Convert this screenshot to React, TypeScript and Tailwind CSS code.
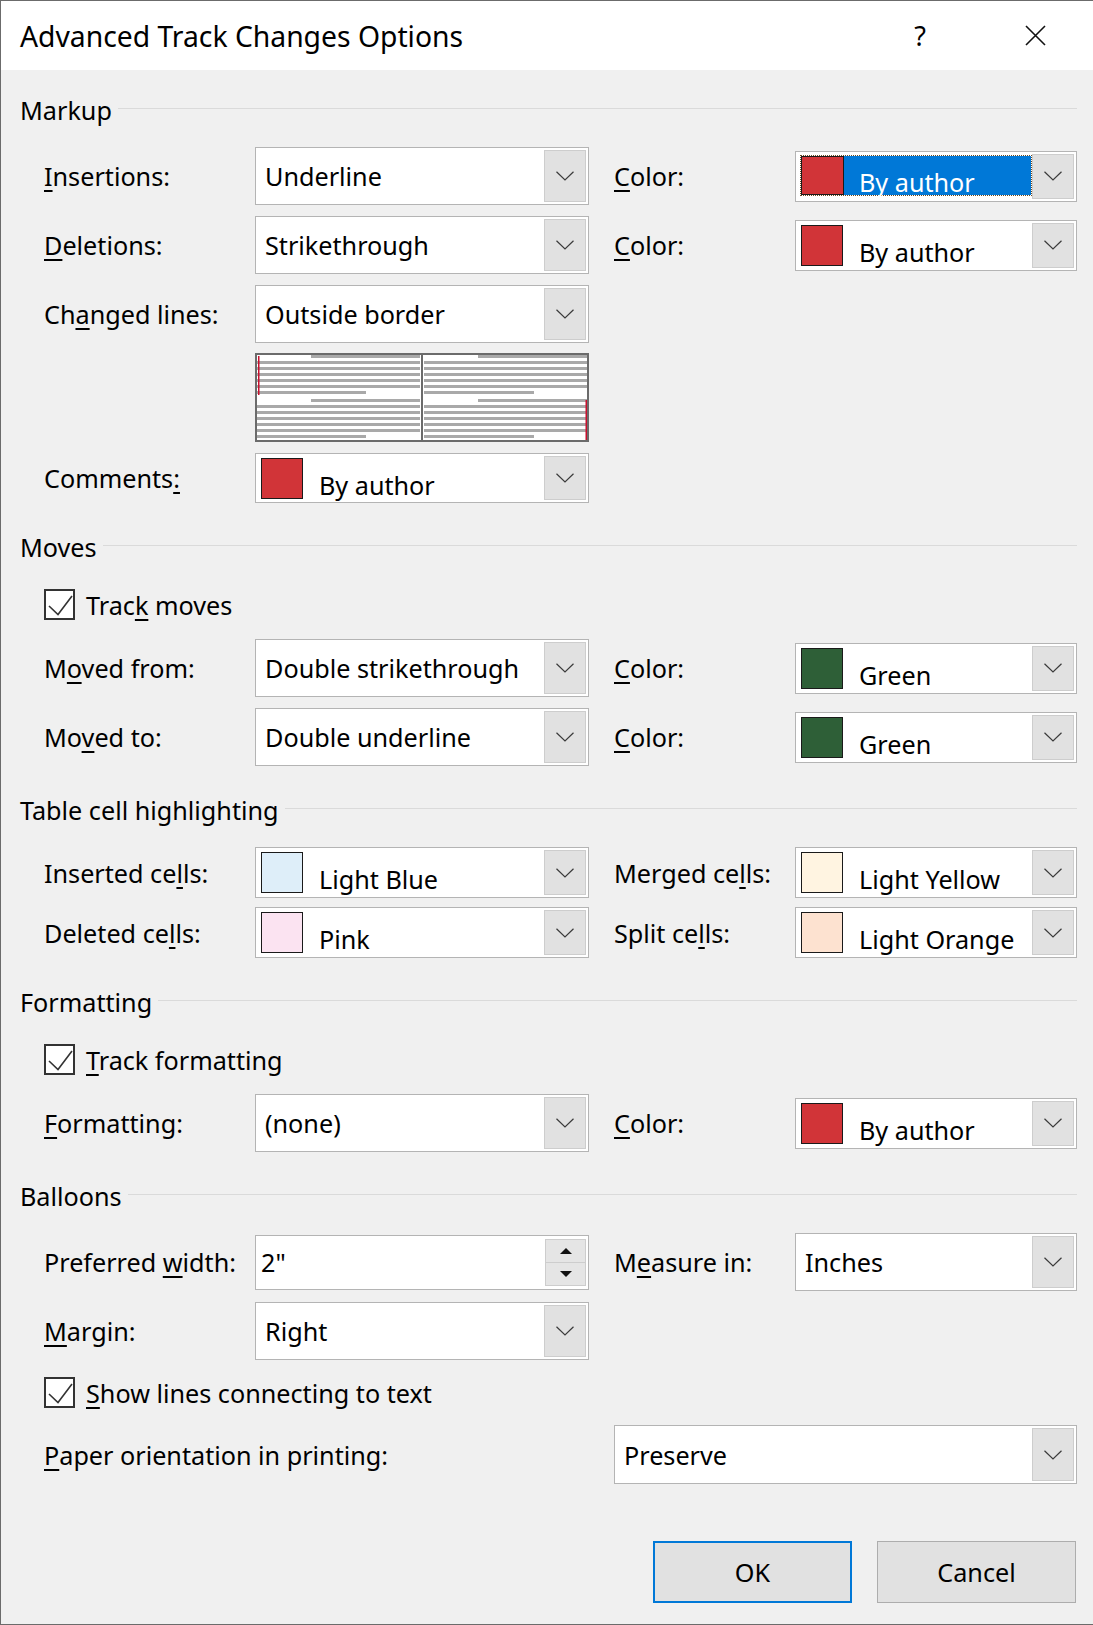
import React from "react";

const RED = "bg-[#d13438]";
const GREEN = "bg-[#2e5f37]";

function U({ children }: { children: React.ReactNode }) {
  return <span className="underline decoration-2 underline-offset-[4px]">{children}</span>;
}

function Chevron() {
  return (
    <svg width="18" height="10" viewBox="0 0 18 10" fill="none" className="block">
      <path d="M0.5 0.8 L9 9 L17.5 0.8" stroke="#3a3a3a" strokeWidth="1.2" />
    </svg>
  );
}

function ChevronBox() {
  return (
    <div className="flex w-[42px] shrink-0 items-center justify-center self-stretch border border-[#cdcdcd] bg-[#e1e1e1]">
      <Chevron />
    </div>
  );
}

function Select({ value, width = "w-[334px]", height = "h-[58px]" }: { value: string; width?: string; height?: string }) {
  return (
    <div className={`flex ${height} ${width} shrink-0 border border-[#b4b4b4] bg-white p-[2px]`}>
      <div className="flex flex-1 items-center pl-[7px]">{value}</div>
      <ChevronBox />
    </div>
  );
}

function ColorSelect({
  swatch,
  value,
  width = "w-[282px]",
  height = "h-[51px]",
  selected = false,
}: {
  swatch: string;
  value: string;
  width?: string;
  height?: string;
  selected?: boolean;
}) {
  return (
    <div className={`flex ${height} ${width} shrink-0 border border-[#b4b4b4] bg-white p-[2px]`}>
      {selected ? (
        <div className="mb-[3px] ml-[2px] mt-[1px] flex flex-1 border border-dotted border-[#6b4a22]">
          <div className={`w-[43px] border border-[#1a1a1a] ${swatch}`} />
          <div className="flex flex-1 items-center bg-[#0078d7] pl-[15px] text-white">
            <span className="mt-[13px]">{value}</span>
          </div>
        </div>
      ) : (
        <div className="flex flex-1 items-center pl-[3px]">
          <div className={`h-[41px] w-[42px] shrink-0 border border-[#1a1a1a] ${swatch}`} />
          <span className="ml-[16px] mt-[13px]">{value}</span>
        </div>
      )}
      <ChevronBox />
    </div>
  );
}

function Check({ children }: { children: React.ReactNode }) {
  return (
    <div className="flex h-[31px] items-center">
      <div className="flex h-[31px] w-[31px] shrink-0 items-center justify-center border-2 border-[#333333] bg-white">
        <svg width="27" height="27" viewBox="0 0 27 27" fill="none" className="block">
          <path d="M3 15 L12 23.5 L26 5" stroke="#333333" strokeWidth="1.6" />
        </svg>
      </div>
      <span className="ml-[11px]">{children}</span>
    </div>
  );
}

function Header({ title, className }: { title: string; className: string }) {
  return (
    <div className={`flex h-[30px] items-start ${className}`}>
      <span className="leading-[30px]">{title}</span>
      <div className="ml-[6px] mt-[13px] h-px flex-1 bg-[#dadada]" />
    </div>
  );
}

function Label({ children, width = "w-[211px]" }: { children: React.ReactNode; width?: string }) {
  return <div className={`${width} shrink-0`}>{children}</div>;
}

function Preview() {
  const panes = [
    { x0: 0, x1: 163, indent: 54, short: 109 },
    { x0: 167, x1: 330, indent: 221, short: 277 },
  ];
  const lines: React.ReactElement[] = [];
  panes.forEach((p, pi) => {
    [0, 44].forEach((top) => {
      for (let i = 0; i < 7; i++) {
        const x = i === 0 ? p.indent : p.x0;
        const end = i === 6 ? p.short : p.x1;
        lines.push(<rect key={`${pi}-${top}-${i}`} x={x} y={top + i * 6} width={end - x} height={3} fill="#a9a9a9" />);
      }
    });
  });
  return (
    <div className="ml-[211px] h-[89px] w-[334px] border-2 border-[#6b6b6b] bg-white">
      <svg width="330" height="85" viewBox="0 0 330 85" className="block">
        {lines}
        <rect x="164" y="0" width="2" height="85" fill="#6b6b6b" />
        <rect x="1" y="1" width="1.5" height="39" fill="#c8102e" />
        <rect x="328.5" y="45" width="1.5" height="40" fill="#c8102e" />
      </svg>
    </div>
  );
}

function SpinBox({ value }: { value: string }) {
  return (
    <div className="flex h-[55px] w-[334px] shrink-0 border border-[#b4b4b4] bg-white pr-[2px]">
      <div className="flex flex-1 items-center pl-[5px]">{value}</div>
      <div className="my-[3px] flex w-[41px] flex-col">
        <div className="flex flex-1 items-center justify-center border border-[#cdcdcd] bg-[#e5e5e5]">
          <svg width="12" height="6" viewBox="0 0 12 6" className="block">
            <path d="M0 6 L6 0 L12 6 Z" fill="#111111" />
          </svg>
        </div>
        <div className="flex flex-1 items-center justify-center border border-t-0 border-[#cdcdcd] bg-[#e5e5e5]">
          <svg width="12" height="6" viewBox="0 0 12 6" className="block">
            <path d="M0 0 L12 0 L6 6 Z" fill="#111111" />
          </svg>
        </div>
      </div>
    </div>
  );
}

export default function App() {
  return (
    <div className="flex h-[1625px] w-[1093px] flex-col border-b border-l border-t border-[#6b6b6b] bg-[#f0f0f0] font-['Noto_Sans',sans-serif] text-[25.2px] leading-[30px] text-black">
      {/* title bar */}
      <div className="flex h-[69px] shrink-0 items-center bg-white pl-[19px] pr-[28px]">
        <div className="flex-1 text-[28.3px]">Advanced Track Changes Options</div>
        <div className="w-[60px] text-center text-[27px]">?</div>
        <div className="ml-[55px] flex w-[60px] justify-center">
          <svg width="21" height="21" viewBox="0 0 21 21" className="block">
            <path d="M1 1 L20 20 M20 1 L1 20" stroke="#111111" strokeWidth="1.6" />
          </svg>
        </div>
      </div>

      <div className="flex flex-col pl-[19px] pr-[16px]">
        <Header title="Markup" className="mt-[25px]" />

        <div className="flex h-[58px] items-center pl-[24px] mt-[22px]">
          <Label>
            <U>I</U>nsertions:
          </Label>
          <Select value="Underline" />
          <Label width="ml-[25px] w-[181px]">
            <U>C</U>olor:
          </Label>
          <ColorSelect swatch={RED} value="By author" selected />
        </div>

        <div className="flex h-[58px] items-center pl-[24px] mt-[11px]">
          <Label>
            <U>D</U>eletions:
          </Label>
          <Select value="Strikethrough" />
          <Label width="ml-[25px] w-[181px]">
            <U>C</U>olor:
          </Label>
          <ColorSelect swatch={RED} value="By author" />
        </div>

        <div className="flex h-[58px] items-center pl-[24px] mt-[11px]">
          <Label>
            Ch<U>a</U>nged lines:
          </Label>
          <Select value="Outside border" />
        </div>

        <div className="mt-[10px] pl-[24px]">
          <Preview />
        </div>

        <div className="flex h-[50px] items-center pl-[24px] mt-[11px]">
          <Label>
            Comments<U>:</U>
          </Label>
          <ColorSelect swatch={RED} value="By author" width="w-[334px]" height="h-[50px]" />
        </div>

        <Header title="Moves" className="mt-[29px]" />

        <div className="mt-[27px] pl-[24px]">
          <Check>
            Trac<U>k</U> moves
          </Check>
        </div>

        <div className="flex h-[58px] items-center pl-[24px] mt-[19px]">
          <Label>
            M<U>o</U>ved from:
          </Label>
          <Select value="Double strikethrough" />
          <Label width="ml-[25px] w-[181px]">
            <U>C</U>olor:
          </Label>
          <ColorSelect swatch={GREEN} value="Green" />
        </div>

        <div className="flex h-[58px] items-center pl-[24px] mt-[11px]">
          <Label>
            Mo<U>v</U>ed to:
          </Label>
          <Select value="Double underline" />
          <Label width="ml-[25px] w-[181px]">
            <U>C</U>olor:
          </Label>
          <ColorSelect swatch={GREEN} value="Green" />
        </div>

        <Header title="Table cell highlighting" className="mt-[29px]" />

        <div className="flex h-[51px] items-center pl-[24px] mt-[22px]">
          <Label>
            Inserted ce<U>l</U>ls:
          </Label>
          <ColorSelect swatch="bg-[#deeef9]" value="Light Blue" width="w-[334px]" />
          <Label width="ml-[25px] w-[181px]">
            Merged ce<U>l</U>ls:
          </Label>
          <ColorSelect swatch="bg-[#fff4e1]" value="Light Yellow" />
        </div>

        <div className="flex h-[51px] items-center pl-[24px] mt-[9px]">
          <Label>
            Deleted ce<U>l</U>ls:
          </Label>
          <ColorSelect swatch="bg-[#fbe3f1]" value="Pink" width="w-[334px]" />
          <Label width="ml-[25px] w-[181px]">
            Split ce<U>l</U>ls:
          </Label>
          <ColorSelect swatch="bg-[#fde2d0]" value="Light Orange" />
        </div>

        <Header title="Formatting" className="mt-[29px]" />

        <div className="mt-[27px] pl-[24px]">
          <Check>
            <U>T</U>rack formatting
          </Check>
        </div>

        <div className="flex h-[58px] items-center pl-[24px] mt-[19px]">
          <Label>
            <U>F</U>ormatting:
          </Label>
          <Select value="(none)" />
          <Label width="ml-[25px] w-[181px]">
            <U>C</U>olor:
          </Label>
          <ColorSelect swatch={RED} value="By author" />
        </div>

        <Header title="Balloons" className="mt-[29px]" />

        <div className="flex h-[58px] items-center pl-[24px] mt-[22px]">
          <Label>
            Preferred <U>w</U>idth:
          </Label>
          <SpinBox value={'2"'} />
          <Label width="ml-[25px] w-[181px]">
            M<U>e</U>asure in:
          </Label>
          <Select value="Inches" width="w-[282px]" />
        </div>

        <div className="flex h-[58px] items-center pl-[24px] mt-[11px]">
          <Label>
            <U>M</U>argin:
          </Label>
          <Select value="Right" />
        </div>

        <div className="mt-[17px] pl-[24px]">
          <Check>
            <U>S</U>how lines connecting to text
          </Check>
        </div>

        <div className="flex h-[59px] items-center pl-[24px] mt-[17px]">
          <Label width="w-[570px]">
            <U>P</U>aper orientation in printing:
          </Label>
          <Select value="Preserve" width="w-[463px]" height="h-[59px]" />
        </div>

        <div className="mt-[57px] flex justify-end gap-[25px] pr-px">
          <button className="flex h-[62px] w-[199px] items-center justify-center border-2 border-[#0078d7] bg-[#e1e1e1]">
            OK
          </button>
          <button className="flex h-[62px] w-[199px] items-center justify-center border border-[#adadad] bg-[#e1e1e1]">
            Cancel
          </button>
        </div>
      </div>
    </div>
  );
}
